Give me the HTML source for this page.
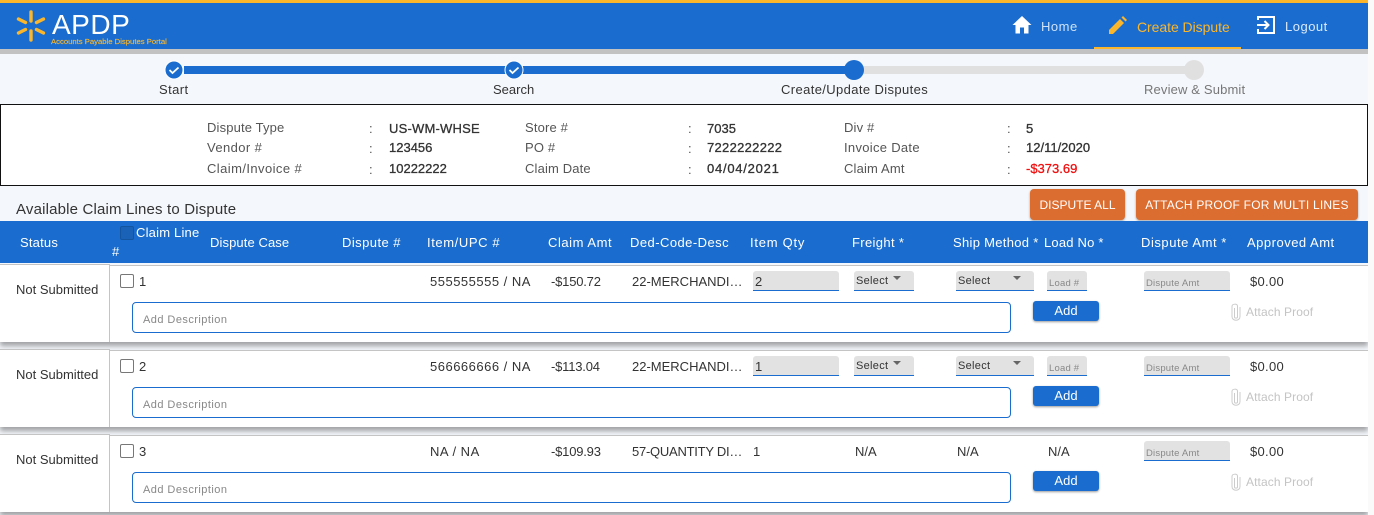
<!DOCTYPE html>
<html lang="en"><head><meta charset="utf-8"><title>APDP</title>
<style>
html,body{margin:0;padding:0;width:1374px;height:515px;overflow:hidden;background:#fafafa;font-family:"Liberation Sans",sans-serif;color:#333;font-size:13px}
.a{position:absolute}
.t{position:absolute;white-space:nowrap;line-height:16px}
.h{color:#fff;top:235px}
.l{color:#555;letter-spacing:.15px}
.b{color:#333;-webkit-text-stroke:.3px #333}
.r{letter-spacing:.3px}
.row{position:absolute;left:0;width:1368px;height:77px;background:#fff;box-shadow:0 4px 5px rgba(0,0,0,.35);clip-path:inset(0 0 -10px 0)}
.i{position:absolute;background:#e2e2e2;border-bottom:1px solid #1a6dce;border-radius:3px 3px 0 0;box-sizing:border-box;height:20px}
.p{position:absolute;white-space:nowrap;color:#888;font-size:9.5px;line-height:12px;letter-spacing:.2px}
.cb{position:absolute;width:14px;height:14px;border:1.5px solid #777;border-radius:2px;box-sizing:border-box}
.add{position:absolute;left:1033px;width:66px;height:20px;background:#1a6dce;border-radius:3px;color:#fff;text-align:center;line-height:20px;box-shadow:0 1px 2px rgba(0,0,0,.4)}
.ds{position:absolute;left:132px;width:879px;height:31px;border:1px solid #1a6dce;border-radius:4px;box-sizing:border-box;background:#fff;color:#888;font-size:11px;line-height:35px;padding-left:10px;letter-spacing:.45px}
.btn{position:absolute;top:189px;height:31px;background:#dc6d30;border-radius:4px;color:#fff;text-align:center;line-height:33px;font-size:12px;box-shadow:0 1px 2px rgba(0,0,0,.35)}
.s{font-size:11px;letter-spacing:.3px}
</style></head><body>
<div class="a" style="left:0;top:0;width:1374px;height:515px;background:#f4f7fb"></div>
<div class="a" style="left:1368px;top:0;width:6px;height:515px;background:#fafafa"></div>
<div class="a" style="left:0;top:3px;width:1368px;height:46px;background:#1a6dce"></div>
<div class="a" style="left:0;top:49px;width:1368px;height:5px;background:#c2c2c2"></div>
<div class="a" style="left:0;top:0;width:1368px;height:3px;background:#fbb62c"></div>

<svg class="a" style="left:16px;top:10px" width="30" height="32" viewBox="0 0 30 32"><g stroke="#fbb62c" stroke-width="3.4" stroke-linecap="round"><path d="M15 2V11M15 21V30M2.500 9 9.500 12.500M20.500 19.500 27.500 23M2.500 23 9.500 19.500M20.500 12.500 27.500 9"/></g></svg>
<div class="t" style="left:52px;top:10px;color:#fff;font-size:28px;line-height:30px;letter-spacing:.5px">APDP</div>
<div class="t" style="left:51px;top:36px;color:#fbb62c;font-size:7.7px;line-height:12px;-webkit-text-stroke:.15px #fbb62c">Accounts Payable Disputes Portal</div>

<svg class="a" style="left:1012px;top:15px" width="20" height="20" viewBox="0 0 20 20"><path d="M10 1 0.500 10H3.500V18.500H8V12.500H12V18.500H16.500V10H19.500Z" fill="#fff"/></svg>
<div class="t" style="left:1041px;top:19px;color:#cfe2f8;letter-spacing:.5px">Home</div>
<svg class="a" style="left:1108px;top:15px" width="20" height="20" viewBox="0 0 20 20"><path d="M1 15 12 4 16 8 5 19H1ZM13.500 2.500 15 1 19 5 17.500 6.500Z" fill="#fbb62c"/></svg>
<div class="t" style="left:1137px;top:19px;color:#fbb62c;font-size:14px;letter-spacing:-.05px">Create Dispute</div>
<div class="a" style="left:1094px;top:47px;width:147px;height:2px;background:#fbb62c"></div>
<svg class="a" style="left:1256px;top:15px" width="20" height="20" viewBox="0 0 20 20"><path d="M2 5V2H18V18H2V14" fill="none" stroke="#fff" stroke-width="2"/><path d="M1 10H12M8.500 6 12.500 10 8.500 14" fill="none" stroke="#fff" stroke-width="2"/></svg>
<div class="t" style="left:1285px;top:19px;color:#dbe9fa;letter-spacing:.5px">Logout</div>

<div class="a" style="left:184px;top:66px;width:670px;height:8px;background:#1a6dce"></div>
<div class="a" style="left:854px;top:66px;width:340px;height:8px;background:#e0e0e0"></div>
<svg class="a" style="left:164px;top:60px" width="20" height="20" viewBox="0 0 20 20"><circle cx="10" cy="10" r="9" fill="#1a6dce" stroke="#fff"/><path d="M5.500 10 8.500 13 14.500 7.500" fill="none" stroke="#fff" stroke-width="1.800"/></svg>
<svg class="a" style="left:504px;top:60px" width="20" height="20" viewBox="0 0 20 20"><circle cx="10" cy="10" r="9" fill="#1a6dce" stroke="#fff"/><path d="M5.500 10 8.500 13 14.500 7.500" fill="none" stroke="#fff" stroke-width="1.800"/></svg>
<div class="a" style="left:844px;top:60px;width:20px;height:20px;border-radius:50%;background:#1a6dce"></div>
<div class="a" style="left:1184px;top:60px;width:20px;height:20px;border-radius:50%;background:#e0e0e0"></div>
<div class="t" style="left:159px;top:82px;letter-spacing:.4px">Start</div>
<div class="t" style="left:493px;top:82px">Search</div>
<div class="t" style="left:781px;top:82px;letter-spacing:.38px">Create/Update Disputes</div>
<div class="t" style="left:1144px;top:82px;color:#777;letter-spacing:.15px">Review &amp; Submit</div>

<div class="a" style="left:0;top:104px;width:1368px;height:82px;background:#fff;border:1px solid #111;box-sizing:border-box"></div>
<div class="t l" style="left:207px;top:120px">Dispute Type</div>
<div class="t l" style="left:207px;top:140px;letter-spacing:.4px">Vendor #</div>
<div class="t l" style="left:207px;top:161px;letter-spacing:.42px">Claim/Invoice #</div>
<div class="t l" style="left:369px;top:121px">:</div><div class="t l" style="left:369px;top:141px">:</div><div class="t l" style="left:369px;top:162px">:</div>
<div class="t b" style="left:389px;top:121px;letter-spacing:.2px">US-WM-WHSE</div>
<div class="t b" style="left:389px;top:140px">123456</div>
<div class="t b" style="left:389px;top:161px">10222222</div>
<div class="t l" style="left:525px;top:120px">Store #</div>
<div class="t l" style="left:525px;top:140px">PO #</div>
<div class="t l" style="left:525px;top:161px">Claim Date</div>
<div class="t l" style="left:688px;top:121px">:</div><div class="t l" style="left:688px;top:141px">:</div><div class="t l" style="left:688px;top:162px">:</div>
<div class="t b" style="left:707px;top:121px">7035</div>
<div class="t b" style="left:707px;top:140px;letter-spacing:.3px">7222222222</div>
<div class="t b" style="left:707px;top:161px;letter-spacing:.75px">04/04/2021</div>
<div class="t l" style="left:844px;top:120px">Div #</div>
<div class="t l" style="left:844px;top:140px;letter-spacing:.3px">Invoice Date</div>
<div class="t l" style="left:844px;top:161px">Claim Amt</div>
<div class="t l" style="left:1007px;top:121px">:</div><div class="t l" style="left:1007px;top:141px">:</div><div class="t l" style="left:1007px;top:162px">:</div>
<div class="t b" style="left:1026px;top:121px">5</div>
<div class="t b" style="left:1026px;top:140px">12/11/2020</div>
<div class="t" style="left:1026px;top:161px;color:#f01010;-webkit-text-stroke:.3px #f01010">-$373.69</div>

<div class="t" style="left:16px;top:202px;font-size:15px;letter-spacing:.17px;color:#333">Available Claim Lines to Dispute</div>
<div class="btn" style="left:1030px;width:95px">DISPUTE ALL</div>
<div class="btn" style="left:1136px;width:222px;letter-spacing:.22px">ATTACH PROOF FOR MULTI LINES</div>

<div class="a" style="left:0;top:221px;width:1368px;height:42px;background:#1a6dce"></div>
<div class="t h" style="left:20px;letter-spacing:.2px">Status</div>
<div class="a" style="left:120px;top:226px;width:14px;height:14px;border:1.5px solid #14559f;background:#1a62b8;border-radius:2px;box-sizing:border-box"></div>
<div class="t h" style="left:136px;top:225px;letter-spacing:.2px">Claim Line</div>
<div class="t h" style="left:112px;top:244px">#</div>
<div class="t h" style="left:210px;letter-spacing:.1px">Dispute Case</div>
<div class="t h" style="left:342px;letter-spacing:.45px">Dispute #</div>
<div class="t h" style="left:427px;letter-spacing:.6px">Item/UPC #</div>
<div class="t h" style="left:548px;letter-spacing:.55px">Claim Amt</div>
<div class="t h" style="left:630px;letter-spacing:.45px">Ded-Code-Desc</div>
<div class="t h" style="left:750px;letter-spacing:.75px">Item Qty</div>
<div class="t h" style="left:852px;letter-spacing:.35px">Freight *</div>
<div class="t h" style="left:953px;letter-spacing:.3px">Ship Method *</div>
<div class="t h" style="left:1044px;letter-spacing:.2px">Load No *</div>
<div class="t h" style="left:1141px;letter-spacing:.55px">Dispute Amt *</div>
<div class="t h" style="left:1247px;letter-spacing:.5px">Approved Amt</div>

<!-- row 1 -->
<div class="row" style="top:265px"></div>
<div class="a" style="left:0;top:264px;width:109px;height:1px;background:#c4c4c4"></div>
<div class="a" style="left:110px;top:265px;width:1258px;height:1px;background:#c4c4c4"></div>
<div class="a" style="left:109px;top:264px;width:1px;height:78px;background:#c4c4c4"></div>
<div class="t" style="left:16px;top:282px">Not Submitted</div>
<div class="cb" style="left:120px;top:274px"></div>
<div class="t" style="left:139px;top:274px">1</div>
<div class="t" style="left:430px;top:274px;letter-spacing:.5px">555555555 / NA</div>
<div class="t" style="left:551px;top:274px;letter-spacing:-.2px">-$150.72</div>
<div class="t" style="left:632px;top:274px;width:113px;overflow:hidden;text-overflow:ellipsis">22-MERCHANDISE</div>
<div class="i" style="left:753px;top:271px;width:86px"></div><div class="t" style="left:755px;top:274px">2</div>
<div class="i" style="left:854px;top:271px;width:60px"></div><div class="t s" style="left:856px;top:273px">Select</div>
<div class="a" style="left:893px;top:276px;border:4px solid transparent;border-top:4px solid #666"></div>
<div class="i" style="left:956px;top:271px;width:78px"></div><div class="t s" style="left:958px;top:273px">Select</div>
<div class="a" style="left:1013px;top:276px;border:4px solid transparent;border-top:4px solid #666"></div>
<div class="i" style="left:1047px;top:271px;width:40px"></div><div class="p" style="left:1049px;top:278px">Load #</div>
<div class="i" style="left:1144px;top:271px;width:86px"></div><div class="p" style="left:1146px;top:278px">Dispute Amt</div>
<div class="t r" style="left:1250px;top:274px">$0.00</div>
<div class="ds" style="top:302px">Add Description</div>
<div class="add" style="top:301px">Add</div>
<svg class="a" style="left:1231px;top:303px" width="10" height="19" viewBox="0 0 10 19"><path d="M3.500 5V14C3.500 15.500 6.500 15.500 6.500 14V3C6.500 .5 1 .5 1 3.500V13.500C1 18.500 9 18.500 9 13.500V4" fill="none" stroke="#ccc" stroke-width="1"/></svg>
<div class="t" style="left:1246px;top:304px;color:#c4c4c4;font-size:12px;letter-spacing:.1px">Attach Proof</div>

<!-- row 2 -->
<div class="row" style="top:350px"></div>
<div class="a" style="left:0;top:349px;width:109px;height:1px;background:#c4c4c4"></div>
<div class="a" style="left:110px;top:350px;width:1258px;height:1px;background:#c4c4c4"></div>
<div class="a" style="left:109px;top:349px;width:1px;height:78px;background:#c4c4c4"></div>
<div class="t" style="left:16px;top:367px">Not Submitted</div>
<div class="cb" style="left:120px;top:359px"></div>
<div class="t" style="left:139px;top:359px">2</div>
<div class="t" style="left:430px;top:359px;letter-spacing:.5px">566666666 / NA</div>
<div class="t" style="left:551px;top:359px;letter-spacing:-.2px">-$113.04</div>
<div class="t" style="left:632px;top:359px;width:113px;overflow:hidden;text-overflow:ellipsis">22-MERCHANDISE</div>
<div class="i" style="left:753px;top:356px;width:86px"></div><div class="t" style="left:755px;top:359px">1</div>
<div class="i" style="left:854px;top:356px;width:60px"></div><div class="t s" style="left:856px;top:358px">Select</div>
<div class="a" style="left:893px;top:361px;border:4px solid transparent;border-top:4px solid #666"></div>
<div class="i" style="left:956px;top:356px;width:78px"></div><div class="t s" style="left:958px;top:358px">Select</div>
<div class="a" style="left:1013px;top:361px;border:4px solid transparent;border-top:4px solid #666"></div>
<div class="i" style="left:1047px;top:356px;width:40px"></div><div class="p" style="left:1049px;top:363px">Load #</div>
<div class="i" style="left:1144px;top:356px;width:86px"></div><div class="p" style="left:1146px;top:363px">Dispute Amt</div>
<div class="t r" style="left:1250px;top:359px">$0.00</div>
<div class="ds" style="top:387px">Add Description</div>
<div class="add" style="top:386px">Add</div>
<svg class="a" style="left:1231px;top:388px" width="10" height="19" viewBox="0 0 10 19"><path d="M3.500 5V14C3.500 15.500 6.500 15.500 6.500 14V3C6.500 .5 1 .5 1 3.500V13.500C1 18.500 9 18.500 9 13.500V4" fill="none" stroke="#ccc" stroke-width="1"/></svg>
<div class="t" style="left:1246px;top:389px;color:#c4c4c4;font-size:12px;letter-spacing:.1px">Attach Proof</div>

<!-- row 3 -->
<div class="row" style="top:435px"></div>
<div class="a" style="left:0;top:434px;width:109px;height:1px;background:#c4c4c4"></div>
<div class="a" style="left:110px;top:435px;width:1258px;height:1px;background:#c4c4c4"></div>
<div class="a" style="left:109px;top:434px;width:1px;height:78px;background:#c4c4c4"></div>
<div class="t" style="left:16px;top:452px">Not Submitted</div>
<div class="cb" style="left:120px;top:444px"></div>
<div class="t" style="left:139px;top:444px">3</div>
<div class="t" style="left:430px;top:444px;letter-spacing:.5px">NA / NA</div>
<div class="t" style="left:551px;top:444px;letter-spacing:-.2px">-$109.93</div>
<div class="t" style="left:632px;top:444px;width:113px;overflow:hidden;text-overflow:ellipsis;letter-spacing:-.25px">57-QUANTITY DISCREPANCY</div>
<div class="t" style="left:753px;top:444px">1</div>
<div class="t" style="left:855px;top:444px">N/A</div>
<div class="t" style="left:957px;top:444px">N/A</div>
<div class="t" style="left:1048px;top:444px">N/A</div>
<div class="i" style="left:1144px;top:441px;width:86px"></div><div class="p" style="left:1146px;top:448px">Dispute Amt</div>
<div class="t r" style="left:1250px;top:444px">$0.00</div>
<div class="ds" style="top:472px">Add Description</div>
<div class="add" style="top:471px">Add</div>
<svg class="a" style="left:1231px;top:473px" width="10" height="19" viewBox="0 0 10 19"><path d="M3.500 5V14C3.500 15.500 6.500 15.500 6.500 14V3C6.500 .5 1 .5 1 3.500V13.500C1 18.500 9 18.500 9 13.500V4" fill="none" stroke="#ccc" stroke-width="1"/></svg>
<div class="t" style="left:1246px;top:474px;color:#c4c4c4;font-size:12px;letter-spacing:.1px">Attach Proof</div>
</body></html>
